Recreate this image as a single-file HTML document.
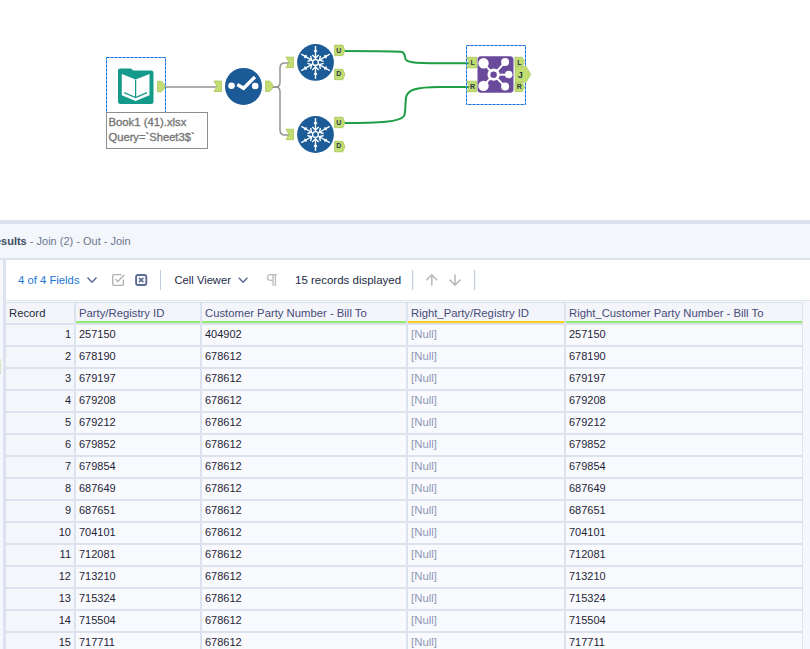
<!DOCTYPE html>
<html><head><meta charset="utf-8">
<style>
html,body{margin:0;padding:0;}
body{width:810px;height:649px;overflow:hidden;position:relative;background:#fff;font-family:"Liberation Sans",sans-serif;}
.a{position:absolute;}
.c{position:absolute;height:20px;background:#f9fafe;font-size:11px;line-height:18px;color:#1e2536;padding-left:3px;box-sizing:border-box;white-space:nowrap;overflow:hidden;}
.c.rec{background:#f4f6fb;text-align:right;padding-left:0;padding-right:3px;}
.c.nul{color:#8f98b6;font-size:11.4px;}
.h{position:absolute;top:303px;height:20px;background:#f3f5fa;font-size:11.3px;line-height:20px;color:#474b78;padding-left:3px;box-sizing:border-box;white-space:nowrap;overflow:hidden;}
.ul{position:absolute;top:321px;height:2px;}
</style></head><body>
<svg class="a" style="left:0;top:0" width="810" height="220" viewBox="0 0 810 220"><style>.an{fill:#c3dd72;stroke:#a6c65a;stroke-width:0.8}.lt{font-family:"Liberation Sans",sans-serif;font-weight:bold;font-size:7px;fill:#24394a}.wf{fill:#fff;stroke:none}</style><g fill="none" stroke="#939393" stroke-width="1.5"><path d="M164,87 H217"/><path d="M272.5,87 H276 C278.5,87 280,85.5 280,82 V68 C280,64.5 281.5,63 285,63 H289"/><path d="M272.5,87 H276 C278.5,87 280,88.5 280,92 V130 C280,133.5 281.5,135 285,135 H289"/></g><g fill="none" stroke="#1e9e44" stroke-width="2"><path d="M343,51 C375,51 398,51 402,52 C405,53 405,57 405.5,59 C406.5,62 411,63.2 440,63.2 L470,63.2"/><path d="M343,123 C380,123 400,122 404,116 C406,112 405,104 406,98 C407,90 415,87 440,87 L470,87"/></g><rect x="106.5" y="57.5" width="59" height="56" fill="none" stroke="#c9ddf7" stroke-width="1"/><rect x="106.5" y="57.5" width="59" height="56" fill="none" stroke="#1571e0" stroke-width="1" stroke-dasharray="3,1"/><path d="M120,68.5 H130.5 Q132,68.5 133,70.5 H151 Q153.5,70.5 153.5,73 V101.5 Q153.5,104 151,104 H120.5 Q118,104 118,101.5 V70.5 Q118,68.5 120,68.5 Z" fill="#149a8a"/><path d="M121.8,74 L135.6,79.6 L149.5,74 V95.3 L135.6,101 L121.8,95.3 Z" fill="#fff"/><g stroke="#149a8a" stroke-width="1.3" fill="none"><path d="M135.6,79.6 V97.3"/><path d="M124.2,92.6 L135.6,97.6 L147,92.6"/></g><path class="an" d="M157.5,81.3 H161.5 Q165.0,84.45 165.0,86.55 Q165.0,88.64999999999999 161.5,91.8 H157.5 Z"/><rect x="106.5" y="112.5" width="101" height="36" fill="#fff" stroke="#8e8e8e" stroke-width="1"/><text x="108.5" y="125.8" style="font-family:'Liberation Sans',sans-serif;font-size:11.3px;fill:#767676;stroke:#767676;stroke-width:0.35">Book1 (41).xlsx</text><text x="108.5" y="140.5" style="font-family:'Liberation Sans',sans-serif;font-size:11.2px;fill:#767676;stroke:#767676;stroke-width:0.35">Query=`Sheet3$`</text><path class="an" d="M214,81 H221.5 V91.5 H214 L217,86.25 Z"/><circle cx="243.5" cy="86.4" r="18.5" fill="#1b5a96"/><circle cx="231.5" cy="85.8" r="3.3" fill="#fff"/><circle cx="255.2" cy="86" r="3.3" fill="#fff"/><path d="M237.3,84.6 L243.6,88.3 L255,76.9" fill="none" stroke="#fff" stroke-width="3.5" stroke-linejoin="miter"/><path class="an" d="M265.5,81 H269.5 Q273.0,84.15 273.0,86.25 Q273.0,88.35 269.5,91.5 H265.5 Z"/><path class="an" d="M286,57.1 H293.5 V67.6 H286 L289,62.35 Z"/><circle cx="315.5" cy="62.4" r="18.4" fill="#1b5b98"/><g stroke="#fff" stroke-width="1.4" fill="none"><line x1="315.50" y1="58.90" x2="315.50" y2="46.00"/><polygon class="wf" points="315.50,49.20 317.60,50.90 315.50,52.60 313.40,50.90"/><line x1="315.50" y1="57.90" x2="318.70" y2="54.90"/><line x1="315.50" y1="57.90" x2="312.30" y2="54.90"/><line x1="312.47" y1="60.65" x2="301.30" y2="54.20"/><polygon class="wf" points="304.07,55.80 306.59,54.83 307.01,57.50 304.49,58.47"/><line x1="311.60" y1="60.15" x2="310.60" y2="55.88"/><line x1="311.60" y1="60.15" x2="307.40" y2="61.42"/><line x1="312.47" y1="64.15" x2="301.30" y2="70.60"/><polygon class="wf" points="304.07,69.00 304.49,66.33 307.01,67.30 306.59,69.97"/><line x1="311.60" y1="64.65" x2="307.40" y2="63.38"/><line x1="311.60" y1="64.65" x2="310.60" y2="68.92"/><line x1="315.50" y1="65.90" x2="315.50" y2="78.80"/><polygon class="wf" points="315.50,75.60 313.40,73.90 315.50,72.20 317.60,73.90"/><line x1="315.50" y1="66.90" x2="312.30" y2="69.90"/><line x1="315.50" y1="66.90" x2="318.70" y2="69.90"/><line x1="318.53" y1="64.15" x2="329.70" y2="70.60"/><polygon class="wf" points="326.93,69.00 324.41,69.97 323.99,67.30 326.51,66.33"/><line x1="319.40" y1="64.65" x2="320.40" y2="68.92"/><line x1="319.40" y1="64.65" x2="323.60" y2="63.38"/><line x1="318.53" y1="60.65" x2="329.70" y2="54.20"/><polygon class="wf" points="326.93,55.80 326.51,58.47 323.99,57.50 324.41,54.83"/><line x1="319.40" y1="60.15" x2="323.60" y2="61.42"/><line x1="319.40" y1="60.15" x2="320.40" y2="55.88"/><circle cx="315.5" cy="62.4" r="2.9"/></g><path class="an" d="M334.6,45.099999999999994 H342.8 L344.8,50.349999999999994 L342.8,55.599999999999994 H334.6 Z"/><text x="338.7" y="52.9" class="lt" text-anchor="middle">U</text><path class="an" d="M334.6,69.2 H342.8 L344.8,74.45 L342.8,79.7 H334.6 Z"/><text x="338.7" y="76.3" class="lt" text-anchor="middle">D</text><path class="an" d="M286,129.2 H293.5 V139.7 H286 L289,134.45 Z"/><circle cx="315.5" cy="134.5" r="18.4" fill="#1b5b98"/><g stroke="#fff" stroke-width="1.4" fill="none"><line x1="315.50" y1="131.00" x2="315.50" y2="118.10"/><polygon class="wf" points="315.50,121.30 317.60,123.00 315.50,124.70 313.40,123.00"/><line x1="315.50" y1="130.00" x2="318.70" y2="127.00"/><line x1="315.50" y1="130.00" x2="312.30" y2="127.00"/><line x1="312.47" y1="132.75" x2="301.30" y2="126.30"/><polygon class="wf" points="304.07,127.90 306.59,126.93 307.01,129.60 304.49,130.57"/><line x1="311.60" y1="132.25" x2="310.60" y2="127.98"/><line x1="311.60" y1="132.25" x2="307.40" y2="133.52"/><line x1="312.47" y1="136.25" x2="301.30" y2="142.70"/><polygon class="wf" points="304.07,141.10 304.49,138.43 307.01,139.40 306.59,142.07"/><line x1="311.60" y1="136.75" x2="307.40" y2="135.48"/><line x1="311.60" y1="136.75" x2="310.60" y2="141.02"/><line x1="315.50" y1="138.00" x2="315.50" y2="150.90"/><polygon class="wf" points="315.50,147.70 313.40,146.00 315.50,144.30 317.60,146.00"/><line x1="315.50" y1="139.00" x2="312.30" y2="142.00"/><line x1="315.50" y1="139.00" x2="318.70" y2="142.00"/><line x1="318.53" y1="136.25" x2="329.70" y2="142.70"/><polygon class="wf" points="326.93,141.10 324.41,142.07 323.99,139.40 326.51,138.43"/><line x1="319.40" y1="136.75" x2="320.40" y2="141.02"/><line x1="319.40" y1="136.75" x2="323.60" y2="135.48"/><line x1="318.53" y1="132.75" x2="329.70" y2="126.30"/><polygon class="wf" points="326.93,127.90 326.51,130.57 323.99,129.60 324.41,126.93"/><line x1="319.40" y1="132.25" x2="323.60" y2="133.52"/><line x1="319.40" y1="132.25" x2="320.40" y2="127.98"/><circle cx="315.5" cy="134.5" r="2.9"/></g><path class="an" d="M334.6,117.2 H342.8 L344.8,122.45 L342.8,127.7 H334.6 Z"/><text x="338.7" y="125" class="lt" text-anchor="middle">U</text><path class="an" d="M334.6,141.3 H342.8 L344.8,146.55 L342.8,151.8 H334.6 Z"/><text x="338.7" y="148.4" class="lt" text-anchor="middle">D</text><rect x="466.5" y="45.5" width="59" height="59" fill="none" stroke="#c9ddf7" stroke-width="1"/><rect x="466.5" y="45.5" width="59" height="59" fill="none" stroke="#1571e0" stroke-width="1" stroke-dasharray="3,1"/><path class="an" d="M466.8,57.3 H476.8 V67.8 H466.8 L469.3,62.55 Z"/><text x="472.6" y="64.9" class="lt" text-anchor="middle">L</text><path class="an" d="M466.8,81.2 H476.8 V91.7 H466.8 L469.3,86.45 Z"/><text x="472.6" y="88.6" class="lt" text-anchor="middle">R</text><rect x="477.5" y="56.3" width="36" height="36.4" rx="3.5" fill="#6a4b9b"/><g stroke="#fff" stroke-width="2"><line x1="493.5" y1="74.7" x2="483.5" y2="63.2"/><line x1="493.5" y1="74.7" x2="483.5" y2="85.9"/><line x1="493.5" y1="74.7" x2="505.1" y2="62.1"/><line x1="493.5" y1="74.7" x2="509.1" y2="74.7"/><line x1="493.5" y1="74.7" x2="505.1" y2="86.6"/></g><g fill="#fff"><circle cx="483.5" cy="63.2" r="5.2"/><circle cx="483.5" cy="85.9" r="5.2"/><circle cx="505.1" cy="62.1" r="4"/><circle cx="508.7" cy="74.5" r="3.8"/><circle cx="505.1" cy="86.6" r="4"/></g><circle cx="493.6" cy="74.7" r="4.7" fill="#6a4b9b" stroke="#fff" stroke-width="2.9"/><path class="an" d="M515,57.3 H522.2 L524.7,61.8 L522.2,66.3 H515 Z"/><text x="519.3" y="64.6" class="lt" text-anchor="middle">L</text><path class="an" d="M515,82.6 H522.2 L524.7,87.1 L522.2,91.6 H515 Z"/><text x="519.3" y="88.9" class="lt" text-anchor="middle">R</text><path class="an" d="M515.2,66.4 H526 L530.7,74.4 L526,82.3 H515.2 Z"/><text x="520.2" y="77.7" class="lt" style="font-size:9px" text-anchor="middle">J</text></svg>
<div class="a" style="left:0;top:220px;width:810px;height:4px;background:#dde3ee"></div>
<div class="a" style="left:0;top:224px;width:810px;height:34px;background:#f3f6fb"></div>
<div class="a" style="left:-13px;top:233px;font-size:11px;line-height:16px;white-space:nowrap;color:#6b7690"><b style="color:#3d4a61">Results</b> - Join (2) - Out - Join</div>
<div class="a" style="left:0;top:258px;width:810px;height:2px;background:#dde3ee"></div>
<div class="a" style="left:0;top:260px;width:3px;height:389px;background:#f4f7fc"></div>
<div class="a" style="left:3px;top:260px;width:3px;height:389px;background:#dce2ee"></div>
<div class="a" style="left:6px;top:260px;width:804px;height:40px;background:#fff"></div>
<div class="a" style="left:6px;top:300px;width:804px;height:349px;background:#f5f7fc"></div>
<div class="a" style="left:18px;top:273px;font-size:11.3px;line-height:14px;color:#2176d8;white-space:nowrap">4 of 4 Fields</div>
<div class="a" style="left:174.5px;top:273px;font-size:11.2px;line-height:14px;color:#222b45;white-space:nowrap">Cell Viewer</div>
<div class="a" style="left:295px;top:273px;font-size:11.5px;line-height:14px;color:#222b45;white-space:nowrap">15 records displayed</div>
<svg class="a" style="left:0;top:260px" width="810" height="40" viewBox="0 260 810 40">
<g fill="none" stroke="#5b6c91" stroke-width="1.5" stroke-linejoin="miter"><path d="M87.5,277.5 L92,282.2 L96.5,277.5"/><path d="M238.8,277.8 L243.1,282.2 L247.4,277.8"/></g>
<g fill="none" stroke="#b2b2b2" stroke-width="1.35"><path d="M121.5,274.6 H113.8 Q112.7,274.6 112.7,275.7 V284.2 Q112.7,285.3 113.8,285.3 H122.3 Q123.4,285.3 123.4,284.2 V279.5"/><path d="M115.5,279.3 L117.8,281.5 L124.2,274.9" stroke-width="1.4"/></g>
<rect x="136.1" y="275" width="10.2" height="10" rx="2" fill="none" stroke="#5a6d94" stroke-width="1.9"/>
<g stroke="#5a6d94" stroke-width="1.6"><line x1="139" y1="277.9" x2="143.4" y2="282.1"/><line x1="143.4" y1="277.9" x2="139" y2="282.1"/></g>
<g fill="#c3cde0"><rect x="160" y="270" width="1" height="20"/><rect x="412" y="270" width="1.2" height="20"/><rect x="474" y="270" width="1.2" height="20"/></g>
<g fill="#bababa"><rect x="271.6" y="274" width="5.4" height="1.2"/><rect x="272.4" y="274" width="1.3" height="12"/><rect x="274.8" y="274" width="1.3" height="12"/></g><path d="M272.6,274.6 H270.6 Q267.5,274.6 267.5,277.7 Q267.5,280.4 270.6,280.4 H272.6" fill="none" stroke="#bababa" stroke-width="1.2"/>
<g fill="none" stroke="#bababa" stroke-width="1.6"><path d="M431.8,275 V285.6 M426.4,280.2 L431.8,274.8 L437.2,280.2"/><path d="M455,274.4 V285 M449.6,279.6 L455,285.2 L460.4,279.6"/></g>
</svg>
<div class="a" style="left:7px;top:300px;width:803px;height:1px;background:#dfe4ee"></div>
<div class="a" style="left:6px;top:302px;width:797px;height:347px;background:#dce2ee"></div>
<div class="a" style="left:0;top:359px;width:1px;height:15px;background:#d4e6c4"></div>
<div class="h" style="left:6px;width:68px;color:#262c40">Record</div>
<div class="h" style="left:76px;width:124px">Party/Registry ID</div>
<div class="h" style="left:202px;width:204px">Customer Party Number - Bill To</div>
<div class="h" style="left:408px;width:156px">Right_Party/Registry ID</div>
<div class="h" style="left:566px;width:236px">Right_Customer Party Number - Bill To</div>
<div class="ul" style="left:76px;width:124px;background:#8fec6c"></div>
<div class="ul" style="left:202px;width:204px;background:#8fec6c"></div>
<div class="ul" style="left:408px;width:156px;background:#fbcd1c"></div>
<div class="ul" style="left:566px;width:236px;background:#8fec6c"></div>
<div class="c rec" style="left:6px;top:325px;width:68px">1</div>
<div class="c" style="left:76px;top:325px;width:124px">257150</div>
<div class="c" style="left:202px;top:325px;width:204px">404902</div>
<div class="c nul" style="left:408px;top:325px;width:156px">[Null]</div>
<div class="c" style="left:566px;top:325px;width:236px">257150</div>
<div class="c rec" style="left:6px;top:347px;width:68px">2</div>
<div class="c" style="left:76px;top:347px;width:124px">678190</div>
<div class="c" style="left:202px;top:347px;width:204px">678612</div>
<div class="c nul" style="left:408px;top:347px;width:156px">[Null]</div>
<div class="c" style="left:566px;top:347px;width:236px">678190</div>
<div class="c rec" style="left:6px;top:369px;width:68px">3</div>
<div class="c" style="left:76px;top:369px;width:124px">679197</div>
<div class="c" style="left:202px;top:369px;width:204px">678612</div>
<div class="c nul" style="left:408px;top:369px;width:156px">[Null]</div>
<div class="c" style="left:566px;top:369px;width:236px">679197</div>
<div class="c rec" style="left:6px;top:391px;width:68px">4</div>
<div class="c" style="left:76px;top:391px;width:124px">679208</div>
<div class="c" style="left:202px;top:391px;width:204px">678612</div>
<div class="c nul" style="left:408px;top:391px;width:156px">[Null]</div>
<div class="c" style="left:566px;top:391px;width:236px">679208</div>
<div class="c rec" style="left:6px;top:413px;width:68px">5</div>
<div class="c" style="left:76px;top:413px;width:124px">679212</div>
<div class="c" style="left:202px;top:413px;width:204px">678612</div>
<div class="c nul" style="left:408px;top:413px;width:156px">[Null]</div>
<div class="c" style="left:566px;top:413px;width:236px">679212</div>
<div class="c rec" style="left:6px;top:435px;width:68px">6</div>
<div class="c" style="left:76px;top:435px;width:124px">679852</div>
<div class="c" style="left:202px;top:435px;width:204px">678612</div>
<div class="c nul" style="left:408px;top:435px;width:156px">[Null]</div>
<div class="c" style="left:566px;top:435px;width:236px">679852</div>
<div class="c rec" style="left:6px;top:457px;width:68px">7</div>
<div class="c" style="left:76px;top:457px;width:124px">679854</div>
<div class="c" style="left:202px;top:457px;width:204px">678612</div>
<div class="c nul" style="left:408px;top:457px;width:156px">[Null]</div>
<div class="c" style="left:566px;top:457px;width:236px">679854</div>
<div class="c rec" style="left:6px;top:479px;width:68px">8</div>
<div class="c" style="left:76px;top:479px;width:124px">687649</div>
<div class="c" style="left:202px;top:479px;width:204px">678612</div>
<div class="c nul" style="left:408px;top:479px;width:156px">[Null]</div>
<div class="c" style="left:566px;top:479px;width:236px">687649</div>
<div class="c rec" style="left:6px;top:501px;width:68px">9</div>
<div class="c" style="left:76px;top:501px;width:124px">687651</div>
<div class="c" style="left:202px;top:501px;width:204px">678612</div>
<div class="c nul" style="left:408px;top:501px;width:156px">[Null]</div>
<div class="c" style="left:566px;top:501px;width:236px">687651</div>
<div class="c rec" style="left:6px;top:523px;width:68px">10</div>
<div class="c" style="left:76px;top:523px;width:124px">704101</div>
<div class="c" style="left:202px;top:523px;width:204px">678612</div>
<div class="c nul" style="left:408px;top:523px;width:156px">[Null]</div>
<div class="c" style="left:566px;top:523px;width:236px">704101</div>
<div class="c rec" style="left:6px;top:545px;width:68px">11</div>
<div class="c" style="left:76px;top:545px;width:124px">712081</div>
<div class="c" style="left:202px;top:545px;width:204px">678612</div>
<div class="c nul" style="left:408px;top:545px;width:156px">[Null]</div>
<div class="c" style="left:566px;top:545px;width:236px">712081</div>
<div class="c rec" style="left:6px;top:567px;width:68px">12</div>
<div class="c" style="left:76px;top:567px;width:124px">713210</div>
<div class="c" style="left:202px;top:567px;width:204px">678612</div>
<div class="c nul" style="left:408px;top:567px;width:156px">[Null]</div>
<div class="c" style="left:566px;top:567px;width:236px">713210</div>
<div class="c rec" style="left:6px;top:589px;width:68px">13</div>
<div class="c" style="left:76px;top:589px;width:124px">715324</div>
<div class="c" style="left:202px;top:589px;width:204px">678612</div>
<div class="c nul" style="left:408px;top:589px;width:156px">[Null]</div>
<div class="c" style="left:566px;top:589px;width:236px">715324</div>
<div class="c rec" style="left:6px;top:611px;width:68px">14</div>
<div class="c" style="left:76px;top:611px;width:124px">715504</div>
<div class="c" style="left:202px;top:611px;width:204px">678612</div>
<div class="c nul" style="left:408px;top:611px;width:156px">[Null]</div>
<div class="c" style="left:566px;top:611px;width:236px">715504</div>
<div class="c rec" style="left:6px;top:633px;width:68px">15</div>
<div class="c" style="left:76px;top:633px;width:124px">717711</div>
<div class="c" style="left:202px;top:633px;width:204px">678612</div>
<div class="c nul" style="left:408px;top:633px;width:156px">[Null]</div>
<div class="c" style="left:566px;top:633px;width:236px">717711</div>
</body></html>
